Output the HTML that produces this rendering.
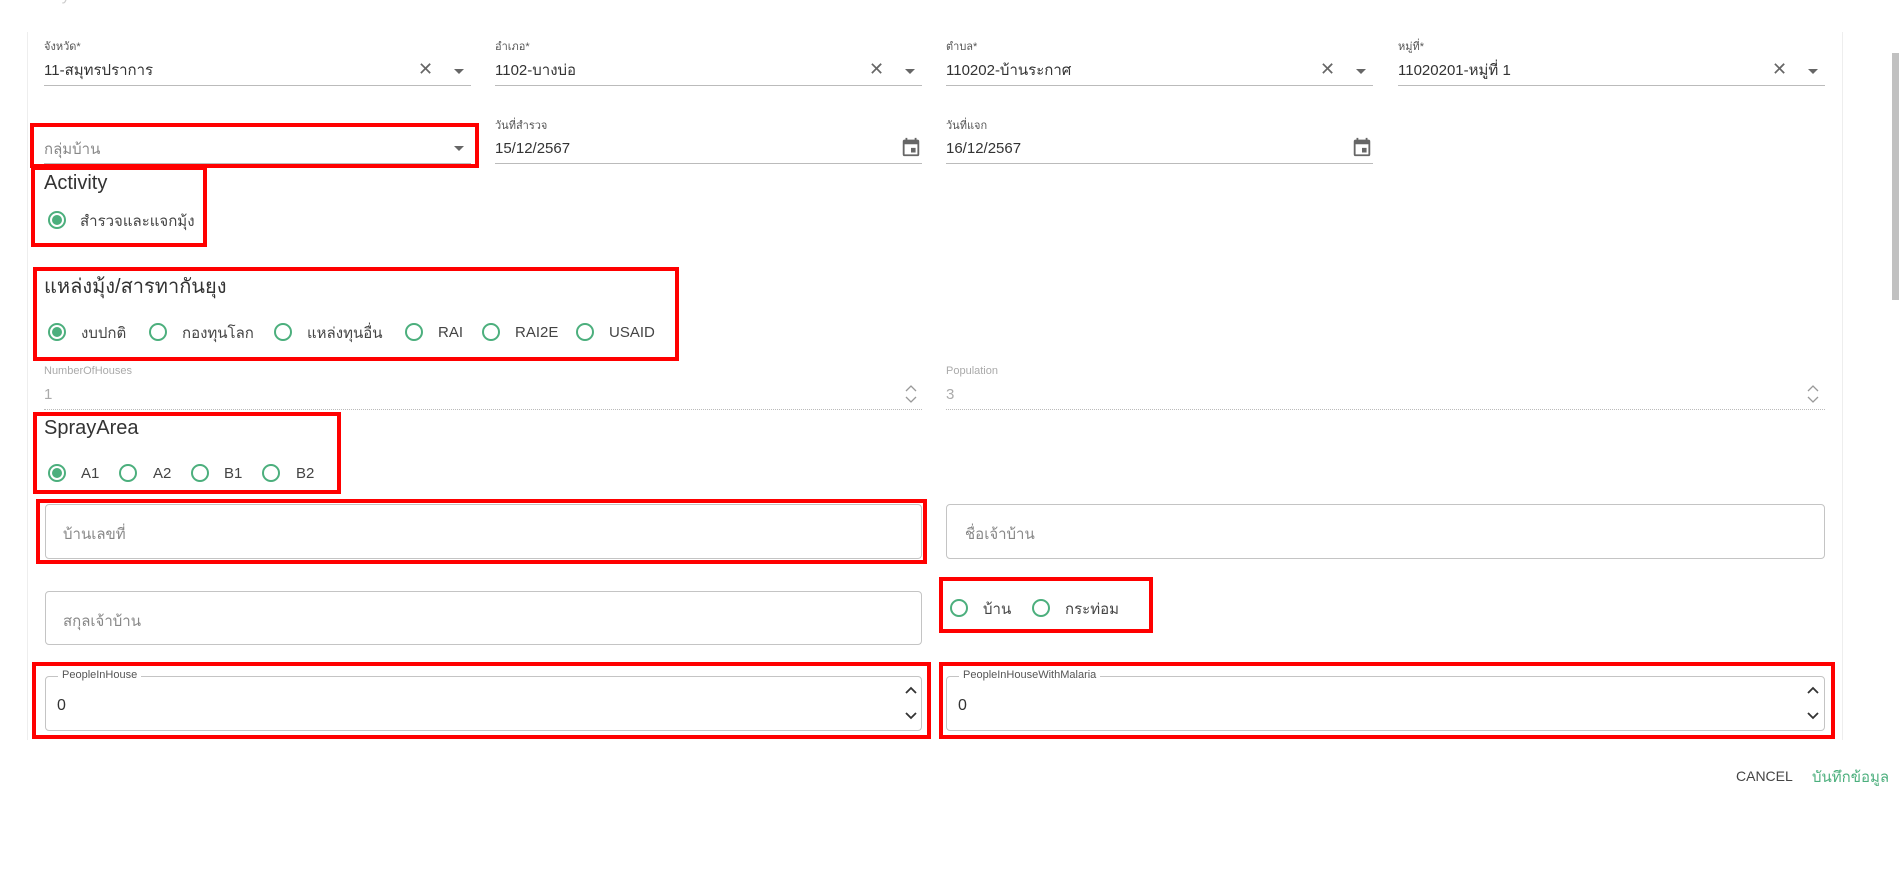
<!DOCTYPE html>
<html><head><meta charset="utf-8">
<style>
*{box-sizing:border-box;margin:0;padding:0}
body{width:1900px;height:870px;background:#fff;position:relative;overflow:hidden;font-family:"Liberation Sans",sans-serif;color:#333}
.a{position:absolute;white-space:nowrap;line-height:1.2}
.lbl{font-size:11px;color:#555}
.val{font-size:15px;color:#333}
.ul{position:absolute;height:1px;background:#bbb}
.red{position:absolute;border:4px solid #f00}
.rad{position:absolute;width:18px;height:18px;border:2px solid #4caf7d;border-radius:50%}
.rad.on::after{content:"";position:absolute;left:2px;top:2px;width:10px;height:10px;border-radius:50%;background:#4caf7d}
.rl{font-size:15px;color:#444}
.box{position:absolute;border:1px solid #c4c4c4;border-radius:4px}
.ph{font-size:15px;color:#888}
.x{font-size:18px;color:#666}
.tri{position:absolute;width:0;height:0;border-left:5px solid transparent;border-right:5px solid transparent;border-top:5px solid #666}
.title{font-size:20px;color:#333}
</style></head><body>
<div class="a" style="left:20px;top:-14px;font-size:16px;color:#ccc">Survey Data</div>
<div style="position:absolute;left:27px;top:32px;width:1px;height:708px;background:#eee"></div>
<div style="position:absolute;left:1842px;top:32px;width:1px;height:708px;background:#eee"></div>
<div style="position:absolute;left:1892px;top:53px;width:7px;height:247px;background:#c1c1c1"></div>

<!-- row 1 -->
<div class="a lbl" style="left:44px;top:41px">จังหวัด*</div>
<div class="a val" style="left:44px;top:62px">11-สมุทรปราการ</div>
<div class="a x" style="left:418px;top:59px">✕</div><div class="tri" style="left:454px;top:69px"></div>
<div class="ul" style="left:44px;top:85px;width:427px"></div>

<div class="a lbl" style="left:495px;top:41px">อำเภอ*</div>
<div class="a val" style="left:495px;top:62px">1102-บางบ่อ</div>
<div class="a x" style="left:869px;top:59px">✕</div><div class="tri" style="left:905px;top:69px"></div>
<div class="ul" style="left:495px;top:85px;width:427px"></div>

<div class="a lbl" style="left:946px;top:41px">ตำบล*</div>
<div class="a val" style="left:946px;top:62px">110202-บ้านระกาศ</div>
<div class="a x" style="left:1320px;top:59px">✕</div><div class="tri" style="left:1356px;top:69px"></div>
<div class="ul" style="left:946px;top:85px;width:427px"></div>

<div class="a lbl" style="left:1398px;top:41px">หมู่ที่*</div>
<div class="a val" style="left:1398px;top:62px">11020201-หมู่ที่ 1</div>
<div class="a x" style="left:1772px;top:59px">✕</div><div class="tri" style="left:1808px;top:69px"></div>
<div class="ul" style="left:1398px;top:85px;width:427px"></div>

<!-- row 2 -->
<div class="a ph" style="left:44px;top:141px">กลุ่มบ้าน</div>
<div class="tri" style="left:454px;top:146px"></div>
<div class="ul" style="left:44px;top:163px;width:427px"></div>
<div class="red" style="left:30px;top:123px;width:449px;height:45px"></div>

<div class="a lbl" style="left:495px;top:120px">วันที่สำรวจ</div>
<div class="a val" style="left:495px;top:140px">15/12/2567</div>
<svg class="a" style="left:900px;top:136px" width="22" height="22" viewBox="0 0 24 24"><path fill="#666" d="M19 4h-1V2h-2v2H8V2H6v2H5a2 2 0 0 0-2 2v14a2 2 0 0 0 2 2h14a2 2 0 0 0 2-2V6a2 2 0 0 0-2-2zm0 16H5V9h14v11zM12 13h5v5h-5z"/></svg>
<div class="ul" style="left:495px;top:163px;width:427px"></div>

<div class="a lbl" style="left:946px;top:120px">วันที่แจก</div>
<div class="a val" style="left:946px;top:140px">16/12/2567</div>
<svg class="a" style="left:1351px;top:136px" width="22" height="22" viewBox="0 0 24 24"><path fill="#666" d="M19 4h-1V2h-2v2H8V2H6v2H5a2 2 0 0 0-2 2v14a2 2 0 0 0 2 2h14a2 2 0 0 0 2-2V6a2 2 0 0 0-2-2zm0 16H5V9h14v11zM12 13h5v5h-5z"/></svg>
<div class="ul" style="left:946px;top:163px;width:427px"></div>

<!-- Activity -->
<div class="a title" style="left:44px;top:171px">Activity</div>
<div class="rad on" style="left:48px;top:211px"></div>
<div class="a rl" style="left:80px;top:213px">สำรวจและแจกมุ้ง</div>
<div class="red" style="left:31px;top:166px;width:176px;height:81px"></div>

<!-- source -->
<div class="a title" style="left:44px;top:275px">แหล่งมุ้ง/สารทากันยุง</div>
<div class="rad on" style="left:48px;top:323px"></div><div class="a rl" style="left:81px;top:325px">งบปกติ</div>
<div class="rad" style="left:149px;top:323px"></div><div class="a rl" style="left:182px;top:325px">กองทุนโลก</div>
<div class="rad" style="left:274px;top:323px"></div><div class="a rl" style="left:307px;top:325px">แหล่งทุนอื่น</div>
<div class="rad" style="left:405px;top:323px"></div><div class="a rl" style="left:438px;top:324px">RAI</div>
<div class="rad" style="left:482px;top:323px"></div><div class="a rl" style="left:515px;top:324px">RAI2E</div>
<div class="rad" style="left:576px;top:323px"></div><div class="a rl" style="left:609px;top:324px">USAID</div>
<div class="red" style="left:33px;top:267px;width:646px;height:94px"></div>

<!-- numbers -->
<div class="a" style="left:44px;top:365px;font-size:11px;color:#aaa">NumberOfHouses</div>
<div class="a" style="left:44px;top:386px;font-size:15px;color:#aaa">1</div>
<svg class="a" style="left:904px;top:380px" width="14" height="28" viewBox="0 0 14 28"><path d="M2 11l5-5 5 5M2 17l5 5 5-5" fill="none" stroke="#999" stroke-width="1.3"/></svg>
<div class="ul" style="left:44px;top:409px;width:878px;background:none;border-top:1px dotted #bbb"></div>
<div class="a" style="left:946px;top:365px;font-size:11px;color:#aaa">Population</div>
<div class="a" style="left:946px;top:386px;font-size:15px;color:#aaa">3</div>
<svg class="a" style="left:1806px;top:380px" width="14" height="28" viewBox="0 0 14 28"><path d="M2 11l5-5 5 5M2 17l5 5 5-5" fill="none" stroke="#999" stroke-width="1.3"/></svg>
<div class="ul" style="left:946px;top:409px;width:879px;background:none;border-top:1px dotted #bbb"></div>

<!-- SprayArea -->
<div class="a title" style="left:44px;top:416px">SprayArea</div>
<div class="rad on" style="left:48px;top:464px"></div><div class="a rl" style="left:81px;top:465px">A1</div>
<div class="rad" style="left:119px;top:464px"></div><div class="a rl" style="left:153px;top:465px">A2</div>
<div class="rad" style="left:191px;top:464px"></div><div class="a rl" style="left:224px;top:465px">B1</div>
<div class="rad" style="left:262px;top:464px"></div><div class="a rl" style="left:296px;top:465px">B2</div>
<div class="red" style="left:33px;top:412px;width:308px;height:82px"></div>

<!-- text inputs -->
<div class="box" style="left:45px;top:504px;width:877px;height:55px"></div>
<div class="a ph" style="left:63px;top:526px">บ้านเลขที่</div>
<div class="red" style="left:36px;top:499px;width:891px;height:65px"></div>
<div class="box" style="left:946px;top:504px;width:879px;height:55px"></div>
<div class="a ph" style="left:965px;top:526px">ชื่อเจ้าบ้าน</div>

<div class="box" style="left:45px;top:591px;width:877px;height:54px"></div>
<div class="a ph" style="left:63px;top:613px">สกุลเจ้าบ้าน</div>

<div class="rad" style="left:950px;top:599px"></div><div class="a rl" style="left:983px;top:601px">บ้าน</div>
<div class="rad" style="left:1032px;top:599px"></div><div class="a rl" style="left:1065px;top:601px">กระท่อม</div>
<div class="red" style="left:939px;top:577px;width:214px;height:56px"></div>

<!-- people -->
<div class="box" style="left:45px;top:676px;width:877px;height:55px"></div>
<div class="a" style="left:58px;top:669px;font-size:11px;color:#555;background:#fff;padding:0 4px">PeopleInHouse</div>
<div class="a" style="left:57px;top:696px;font-size:16px;color:#333">0</div>
<svg class="a" style="left:903px;top:680px" width="16" height="44" viewBox="0 0 16 44"><path d="M3 13l5-5 5 5M3 33l5 5 5-5" fill="none" stroke="#333" stroke-width="1.8"/></svg>
<div class="red" style="left:32px;top:662px;width:899px;height:77px"></div>

<div class="box" style="left:946px;top:676px;width:879px;height:55px"></div>
<div class="a" style="left:959px;top:669px;font-size:11px;color:#555;background:#fff;padding:0 4px">PeopleInHouseWithMalaria</div>
<div class="a" style="left:958px;top:696px;font-size:16px;color:#333">0</div>
<svg class="a" style="left:1805px;top:680px" width="16" height="44" viewBox="0 0 16 44"><path d="M3 13l5-5 5 5M3 33l5 5 5-5" fill="none" stroke="#333" stroke-width="1.8"/></svg>
<div class="red" style="left:939px;top:662px;width:896px;height:77px"></div>

<div class="a" style="left:1736px;top:768px;font-size:14px;color:#444">CANCEL</div>
<div class="a" style="left:1812px;top:769px;font-size:15px;color:#4caf7d">บันทึกข้อมูล</div>
</body></html>
